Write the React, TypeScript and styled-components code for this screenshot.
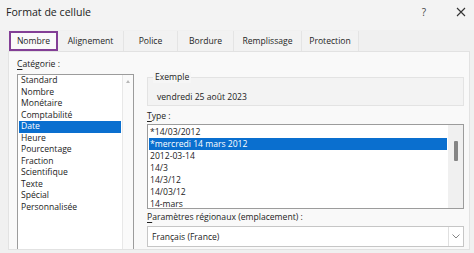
import React from "react";
import styled, { createGlobalStyle } from "styled-components";

const GlobalStyle = createGlobalStyle`
  html, body {
    margin: 0;
    padding: 0;
    background: #f0f0f0;
  }
  * {
    box-sizing: border-box;
  }
`;

const categories = [
  "Standard",
  "Nombre",
  "Monétaire",
  "Comptabilité",
  "Date",
  "Heure",
  "Pourcentage",
  "Fraction",
  "Scientifique",
  "Texte",
  "Spécial",
  "Personnalisée",
];

const types = [
  "*14/03/2012",
  "*mercredi 14 mars 2012",
  "2012-03-14",
  "14/3",
  "14/3/12",
  "14/03/12",
  "14-mars",
];

const tabs = [
  { label: "Nombre", width: 49 },
  { label: "Alignement", width: 66 },
  { label: "Police", width: 54 },
  { label: "Bordure", width: 56 },
  { label: "Remplissage", width: 68 },
  { label: "Protection", width: 57 },
];

function App() {
  return (
    <>
      <GlobalStyle />
      <Window>
        <TitleBar>
          <Title>Format de cellule</Title>
          <TitleButtons>
            <HelpButton>?</HelpButton>
            <CloseButton>
              <svg width="10" height="10" viewBox="0 0 10 10">
                <path d="M1 1 L9 9 M9 1 L1 9" stroke="#333" strokeWidth="1.1" />
              </svg>
            </CloseButton>
          </TitleButtons>
        </TitleBar>

        <TabStrip>
          {tabs.map((t, i) => (
            <Tab key={t.label} active={i === 0} style={{ width: t.width }}>
              {t.label}
            </Tab>
          ))}
        </TabStrip>

        <Panel>
          <LeftCol>
            <Label>
              <u>C</u>atégorie :
            </Label>
            <CategoryList>
              <Rows>
                {categories.map((c) => (
                  <CategoryRow key={c} selected={c === "Date"}>
                    {c}
                  </CategoryRow>
                ))}
              </Rows>
              <LightScroll>
                <UpArrow />
              </LightScroll>
            </CategoryList>
          </LeftCol>

          <RightCol>
            <Sample>
              <SampleLegend>Exemple</SampleLegend>
              <SampleValue>vendredi 25 août 2023</SampleValue>
            </Sample>

            <Label>
              <u>T</u>ype :
            </Label>
            <TypeList>
              <Rows>
                {types.map((t, i) => (
                  <TypeRow key={t} selected={i === 1}>
                    {t}
                  </TypeRow>
                ))}
              </Rows>
              <ScrollTrack>
                <Thumb />
              </ScrollTrack>
            </TypeList>

            <Label>
              <u>P</u>aramètres régionaux (emplacement) :
            </Label>
            <Select>
              <SelectValue>Français (France)</SelectValue>
              <SelectButton>
                <svg width="8" height="5" viewBox="0 0 8 5">
                  <path d="M0.5 0.5 L4 4 L7.5 0.5" fill="none" stroke="#777" strokeWidth="0.9" />
                </svg>
              </SelectButton>
            </Select>
          </RightCol>
        </Panel>
      </Window>
    </>
  );
}

const Window = styled.div`
  width: 474px;
  height: 253px;
  overflow: hidden;
  background: #f0f0f0;
  font-family: "Open Sans", "Noto Sans", sans-serif;
  font-size: 8.6px;
  color: #1b1b1b;
  display: flex;
  flex-direction: column;
`;

const TitleBar = styled.div`
  height: 30px;
  display: flex;
  align-items: center;
  justify-content: space-between;
  padding: 0 8px 6px 6px;
  background: #f3f3f3;
`;

const Title = styled.div`
  font-size: 10.6px;
  color: #222;
`;

const TitleButtons = styled.div`
  display: flex;
  align-items: center;
  gap: 30px;
`;

const HelpButton = styled.div`
  font-size: 10px;
  color: #444;
`;

const CloseButton = styled.div`
  display: flex;
  align-items: center;
`;

const TabStrip = styled.div`
  display: flex;
  height: 20px;
  padding-left: 9px;
  margin-top: 1px;
`;

interface TabProps {
  active?: boolean;
}

const Tab = styled.div<TabProps>`
  height: 20px;
  display: flex;
  align-items: center;
  justify-content: center;
  background: ${(p) => (p.active ? "#fafafa" : "#f2f2f2")};
  border: ${(p) => (p.active ? "2px solid #833f96" : "none")};
  border-right: ${(p) => (p.active ? "2px solid #833f96" : "1px solid #e4e4e4")};
  color: #1f1f1f;
  position: relative;
  z-index: 1;
`;

const Panel = styled.div`
  flex: 1;
  display: flex;
  gap: 13px;
  margin: 0 4px 3px 8px;
  padding: 6px 5px 0 8px;
  background: #f9f9f9;
  border: 1px solid #e2e2e2;
  overflow: hidden;
`;

const LeftCol = styled.div`
  width: 117px;
  display: flex;
  flex-direction: column;
`;

const RightCol = styled.div`
  flex: 1;
  display: flex;
  flex-direction: column;
`;

const Label = styled.div`
  height: 14px;
  line-height: 12px;
  color: #222;
  u {
    text-decoration-thickness: 0.5px;
    text-underline-offset: 1.5px;
  }
`;

const CategoryList = styled.div`
  flex: 1;
  display: flex;
  background: #fff;
  border: 1px solid #9c9c9c;
  border-bottom: none;
  margin-top: 2px;
`;

const Rows = styled.div`
  flex: 1;
  padding: 0 1px;
`;

interface RowProps {
  selected?: boolean;
}

const CategoryRow = styled.div<RowProps>`
  height: 11.5px;
  line-height: 11.5px;
  padding-left: 2px;
  white-space: nowrap;
  background: ${(p) => (p.selected ? "#0a6fcf" : "transparent")};
  color: ${(p) => (p.selected ? "#fff" : "#1b1b1b")};
`;

const LightScroll = styled.div`
  width: 11px;
  background: #fafafa;
  border-left: 1px solid #e8e8e8;
  display: flex;
  justify-content: center;
  padding-top: 5px;
`;

const UpArrow = styled.div`
  width: 0;
  height: 0;
  border-left: 2.5px solid transparent;
  border-right: 2.5px solid transparent;
  border-bottom: 3px solid #b8b8b8;
`;

const Sample = styled.div`
  height: 29px;
  margin-top: 19px;
  margin-bottom: 4px;
  background: #f3f3f3;
  border: 1px solid #e3e3e3;
  padding: 0 0 0 9px;
  display: flex;
  flex-direction: column;
`;

const SampleLegend = styled.div`
  margin-top: -6px;
  margin-left: -4px;
  padding: 0 2px;
  background: #f6f6f6;
  align-self: flex-start;
  line-height: 11px;
  color: #222;
`;

const SampleValue = styled.div`
  margin-top: 8px;
  line-height: 12px;
  color: #222;
`;

const TypeList = styled.div`
  height: 85px;
  display: flex;
  background: #fff;
  border: 1px solid #9c9c9c;
  padding-top: 1px;
  margin-bottom: 2px;
`;

const TypeRow = styled.div<RowProps>`
  height: 12px;
  line-height: 12px;
  padding-left: 1px;
  white-space: nowrap;
  background: ${(p) => (p.selected ? "#0a6fcf" : "transparent")};
  color: ${(p) => (p.selected ? "#fff" : "#1b1b1b")};
`;

const ScrollTrack = styled.div`
  width: 15px;
  background: #f0f0f0;
  margin: -1px 0 0 0;
  display: flex;
  justify-content: center;
  padding-top: 16px;
`;

const Thumb = styled.div`
  width: 4px;
  height: 20px;
  background: #858585;
  border-radius: 1px;
`;

const Select = styled.div`
  height: 21px;
  margin-top: 1px;
  display: flex;
  flex-shrink: 0;
  background: #fff;
  border: 1px solid #c6c6c6;
`;

const SelectValue = styled.div`
  flex: 1;
  display: flex;
  align-items: center;
  padding-left: 4px;
`;

const SelectButton = styled.div`
  width: 15px;
  border-left: 1px solid #e0e0e0;
  display: flex;
  align-items: center;
  justify-content: center;
`;

export default App;
